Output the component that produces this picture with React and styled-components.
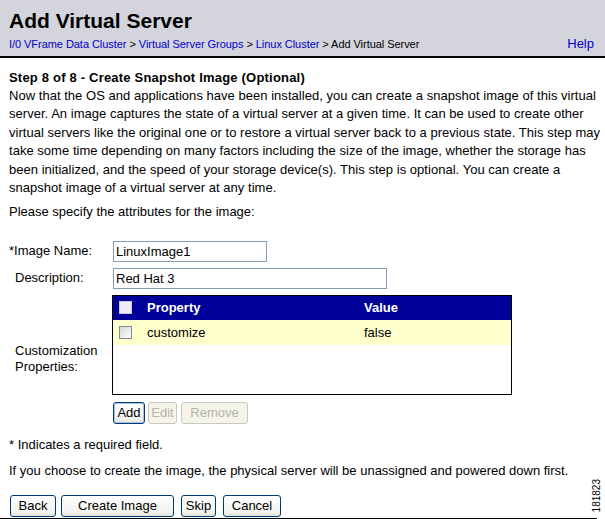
import React from "react";
import styled, { createGlobalStyle } from "styled-components";

const GlobalStyle = createGlobalStyle`
  html, body {
    margin: 0;
    padding: 0;
    background: #ffffff;
  }
  body {
    font-family: "Liberation Sans", Arial, sans-serif;
    color: #000;
  }
`;

const Page = styled.div`
  width: 605px;
  height: 519px;
  position: relative;
  overflow: hidden;
  background: #fff;
`;

const Header = styled.div`
  background: #d4d4dc;
  height: 56px;
  border-bottom: 2px solid #000;
  padding: 0 9px;

  h1 {
    margin: 0;
    padding-top: 9px;
    font-size: 21px;
    font-weight: bold;
    line-height: 24px;
  }
`;

const Crumbs = styled.div`
  display: flex;
  justify-content: space-between;
  align-items: baseline;
  margin-top: 3px;
  font-size: 11px;
  letter-spacing: -0.05px;

  a {
    color: #0000cc;
    text-decoration: none;
  }

  .help {
    font-size: 13px;
    letter-spacing: 0;
    margin-right: 2px;
  }
`;

const Content = styled.div`
  padding: 11px 9px 0 9px;
  font-size: 13px;
`;

const StepTitle = styled.div`
  font-weight: bold;
  font-size: 13px;
  letter-spacing: 0.2px;
  line-height: 18px;
`;

const Para = styled.p`
  margin: ${(p) => p.$mt || 0}px 0 0 0;
  line-height: 18.4px;
  white-space: nowrap;
  letter-spacing: ${(p) => p.$ls || 0}px;
`;

const FormGrid = styled.div`
  display: grid;
  grid-template-columns: 104px auto;
  row-gap: 6px;
  margin-top: 19px;
  align-items: center;
`;

const Label = styled.div`
  padding-left: ${(p) => p.$indent || 0}px;
  line-height: 16px;
`;

const TextInput = styled.div`
  width: ${(p) => p.$w}px;
  height: 21px;
  box-sizing: border-box;
  border: 1px solid #7f9db9;
  padding: 2px 2px;
  line-height: 16px;
`;

const TableBox = styled.div`
  width: 400px;
  height: 100px;
  box-sizing: border-box;
  border: 1px solid #000;
  margin-left: -1px;
`;

const Row = styled.div`
  display: grid;
  grid-template-columns: 34px 217px auto;
  align-items: center;
  height: ${(p) => (p.$head ? 24 : 25)}px;
  background: ${(p) => (p.$head ? "#000099" : "#ffffcc")};
  color: ${(p) => (p.$head ? "#fff" : "#000")};
  font-weight: ${(p) => (p.$head ? "bold" : "normal")};
`;

const Check = styled.span`
  display: block;
  width: 11px;
  height: 11px;
  margin-left: 6px;
  border: 1px solid ${(p) => (p.$head ? "#c8c8d8" : "#7b8b9b")};
  background: ${(p) =>
    p.$head ? "#eeeef4" : "linear-gradient(135deg, #d8d8d4, #ffffff)"};
`;

const TableCol = styled.div`
  display: flex;
  flex-direction: column;
  gap: 7px;
`;

const SmallButtons = styled.div`
  display: flex;
  gap: 3px;
`;

const Btn = styled.button`
  font-family: "Liberation Sans", Arial, sans-serif;
  font-size: 13px;
  height: 22px;
  width: ${(p) => (p.$w ? `${p.$w}px` : "auto")};
  margin-left: ${(p) => p.$ml || 0}px;
  padding: 0;
  background: ${(p) =>
    p.disabled ? "#f5f4ea" : "linear-gradient(#ffffff, #f3f3ee 80%, #e3e2da)"};
  color: ${(p) => (p.disabled ? "#b5b2a8" : "#000")};
  border: 1px solid ${(p) => (p.disabled ? "#cac8bb" : "#003c74")};
  border-radius: 3px;
  box-shadow: ${(p) => (p.$focus ? "inset 0 0 0 1px #a8c4ea" : "none")};
  cursor: default;
`;

const Note = styled.p`
  margin: ${(p) => p.$mt}px 0 0 0;
  line-height: 16px;
`;

const Footer = styled.div`
  display: flex;
  margin: 16px -9px 0 -9px;
  padding: 0 0 1px 10px;
  border-bottom: 2px solid #000;
  width: 587px;
`;

const FigNum = styled.div`
  position: absolute;
  right: 3px;
  bottom: 7px;
  font-size: 10px;
  line-height: 10px;
  writing-mode: vertical-rl;
  transform: rotate(180deg);
`;

export default function App() {
  return (
    <Page>
      <GlobalStyle />
      <Header>
        <h1>Add Virtual Server</h1>
        <Crumbs>
          <span>
            <a href="#">I/0 VFrame Data Cluster</a> &gt;{" "}
            <a href="#">Virtual Server Groups</a> &gt;{" "}
            <a href="#">Linux Cluster</a> &gt; Add Virtual Server
          </span>
          <a className="help" href="#">Help</a>
        </Crumbs>
      </Header>
      <Content>
        <StepTitle>Step 8 of 8 - Create Snapshot Image (Optional)</StepTitle>
        <Para $ls={0.03}>
          Now that the OS and applications have been installed, you can create a snapshot image of this virtual
          <br />
          server. An image captures the state of a virtual server at a given time. It can be used to create other
          <br />
          virtual servers like the original one or to restore a virtual server back to a previous state. This step may
          <br />
          take some time depending on many factors including the size of the image, whether the storage has
          <br />
          been initialized, and the speed of your storage device(s). This step is optional. You can create a
          <br />
          snapshot image of a virtual server at any time.
        </Para>
        <Para $mt={6}>Please specify the attributes for the image:</Para>
        <FormGrid>
          <Label>*Image Name:</Label>
          <TextInput $w={154}>LinuxImage1</TextInput>
          <Label $indent={6}>Description:</Label>
          <TextInput $w={274}>Red Hat 3</TextInput>
          <Label $indent={6}>
            Customization
            <br />
            Properties:
          </Label>
          <TableCol>
            <TableBox>
              <Row $head>
                <Check $head />
                <span>Property</span>
                <span>Value</span>
              </Row>
              <Row>
                <Check />
                <span>customize</span>
                <span>false</span>
              </Row>
            </TableBox>
            <SmallButtons>
              <Btn $focus $w={32}>Add</Btn>
              <Btn disabled $w={29}>Edit</Btn>
              <Btn disabled $w={67} $ml={1}>Remove</Btn>
            </SmallButtons>
          </TableCol>
        </FormGrid>
        <Note $mt={13}>* Indicates a required field.</Note>
        <Note $mt={10}>
          If you choose to create the image, the physical server will be unassigned and powered down first.
        </Note>
        <Footer>
          <Btn $w={46}>Back</Btn>
          <Btn $w={113} $ml={5}>Create Image</Btn>
          <Btn $w={35} $ml={7}>Skip</Btn>
          <Btn $w={58} $ml={7}>Cancel</Btn>
        </Footer>
      </Content>
      <FigNum>181823</FigNum>
    </Page>
  );
}
